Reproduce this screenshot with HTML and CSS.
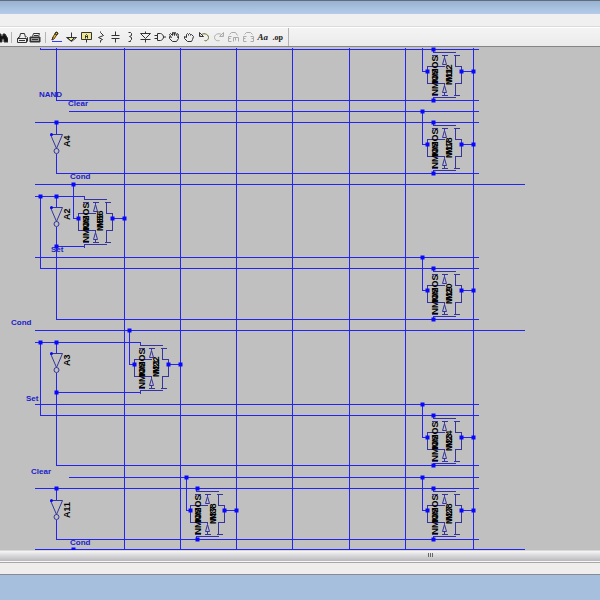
FILE: index.html
```html
<!DOCTYPE html>
<html lang="en">
<head>
    <meta charset="UTF-8">
    <meta name="viewport" content="width=device-width, initial-scale=1.0">
    <title>Schematic Editor</title>
    <link rel="stylesheet" href="styles.css">
</head>
<body>
    <div class="titlebar"></div>
    <div class="menubar"></div>
    <div class="toolbar">
        <div class="tools find">
            <button aria-label="Find"><svg viewBox="0 0 12 12"><path class="solid" d="M2 2h3v2h2V2h2l3 5v3H8V7H6v3H1V5z"/></svg></button>
        </div>
        <div class="tools print">
            <button aria-label="Print setup"><svg viewBox="0 0 12 12"><path d="M3.5 5.5l1-4h4l1 4M1.5 6.5l2-2M1.5 6.5h9v4h-9zM10.5 4.5l1 1v4M3 8.5h6"/></svg></button>
            <button aria-label="Print"><svg viewBox="0 0 12 12"><path class="shade" d="M1 5h10v5H1z"/><path d="M3.5 4.5l1-3h6l-1 3M1.5 5.5h9v4h-9zM3 7.5h6M5 3.500h4"/></svg></button>
        </div>
        <div class="tools draw">
            <button aria-label="Wire"><svg viewBox="0 0 12 12"><path class="pencil" d="M6 1l2 1-4 6-2 1 1-3z"/><path d="M6 1l2 1-1 2-2-1zM2 9l1-3"/><path class="wire-line" d="M2 10.5h10"/></svg></button>
            <button aria-label="Ground"><svg viewBox="-.5 -.5 12 12"><path class="yellow" d="M2 6h7L5.500 9.500z"/><path d="M6 1v5M1 6h10l-5 4z"/></svg></button>
            <button aria-label="Label net"><svg viewBox="-.5 -.5 12 12"><path class="yellow" d="M1 1h10v7H1z"/><path d="M6 8v3M5 7V4l1-1 1 1v3M5 5h2"/></svg></button>
            <button aria-label="Resistor"><svg viewBox="-.5 -.5 12 12"><path d="M5 0v1L8 4 3 6l4 2-2 1v2"/></svg></button>
            <button aria-label="Capacitor"><svg viewBox="-.5 -.5 12 12"><path d="M6 0v4M2 4h8M2 7h8M6 7v4"/></svg></button>
            <button aria-label="Inductor"><svg viewBox="-.5 -.5 12 12"><path d="M4 1h2l1 1v2L5 5l2 1v2l-1 1v1H4"/></svg></button>
            <button aria-label="Diode"><svg viewBox="-.5 -.5 12 12"><path d="M6 0v2M1 2h10L6 7zM1 8h10M6 8v3"/></svg></button>
            <button aria-label="Component"><svg viewBox="-.5 -.5 12 12"><path d="M3 2h3c4 1 4 6 0 7H3zM0 4h3M0 7h3M9 5.500h3"/></svg></button>
            <button aria-label="Move"><svg viewBox="-.5 -.5 12 12"><path d="M4 10L1 7V5l2 1-2-3 1-1 2 2V1h1l1 3V1h1l1 3 1-2 1 1-1 3 1-1v2l-2 3z"/></svg></button>
            <button aria-label="Drag"><svg viewBox="-.5 -.5 12 12"><path d="M4 10L1 7V5l2 1V3l1-1 1 1 1-1 1 1h1l2 2-1 3-1 2zM5 3v1M7 3v1"/></svg></button>
            <button aria-label="Undo"><svg viewBox="-.5 -.5 12 12"><path class="arc" d="M2 4c2-3 8-2 8 2 0 2-2 4-4 3"/><path d="M1 1v4h4z"/></svg></button>
            <button aria-label="Redo" disabled><svg viewBox="-.5 -.5 12 12"><path d="M9 4C7 1 1 2 1 6c0 2 2 4 5 3M10 1v4H6z"/></svg></button>
            <button aria-label="Rotate" disabled><svg viewBox="-.5 -.5 12 12"><path d="M2 3l2-2h4l2 3M4 5H1v5h3M1 7h2M6 10V6h5v4M8 6v3"/></svg></button>
            <button aria-label="Mirror" disabled><svg viewBox="-.5 -.5 12 12"><path d="M2 3l2-2h4l2 2M4 5H1v5h3M1 7h2M8 5h3v5H8M9 7h2"/></svg></button>
            <button class="text-tool">Aa</button>
            <button class="op-tool">.op</button>
        </div>
    </div>

    <main class="sheet">
        <svg class="schematic" width="600" height="503" viewBox="0 47 600 503" role="img" aria-label="Circuit schematic">
            <defs>
                <!-- inverter, origin at its input node -->
                <g id="inv">
                    <path class="wire" d="M0 0V12M0 31V51"/>
                    <path class="part" d="M-6 12H6L0 26z"/>
                    <circle class="part" cx="0" cy="28.5" r="2.5"/>
                    <circle class="pin" cx="-5" cy="12" r="1.5"/>
                </g>
                <!-- transmission gate, origin at the upper gate -->
                <g id="tgate">
                    <path class="wire" d="M-11 22H-6M28 22H40"/>
                    <path class="part line" d="M0 0V3H22M-2 6H4M8 6H14M20 6H26M22 6V17H28V34H22V46M11 17H-6V34H11M-2 46H4M8 46H14M20 46H26M0 51V48H22"/>
                    <path class="part" d="M11 6V8L9 15H13L11 8M11 34V36L9 43H13L11 36M11 43V46"/>
                    <rect class="node" x="-8" y="20" width="4" height="4"/>
                    <rect class="node" x="26" y="20" width="4" height="4"/>
                    <rect class="node" x="38" y="20" width="4" height="4"/>
                    <text class="name" transform="translate(4 46) rotate(-90)">NMOS</text>
                    <text class="name" transform="translate(4 33) rotate(-90)">NMOS</text>
                </g>
                <rect id="dot" class="node" x="-2" y="-2" width="4" height="4"/>
            </defs>

            <g transform="translate(.5 .5)">
                <!-- vertical buses -->
                <path class="wire" d="M124 47V549M180 47V549M236 47V549M292 47V549M349 47V549M405 47V549M473 47V549"/>
                <!-- rows -->
                <path class="wire" d="M40 47V49H478M56 47V100H478M68 111H478M34 122H478M56 173H478"/>
                <path class="wire" d="M34 184H524M34 196H84M56 246H84M34 257H478M40 196V268H478M56 246V319H478"/>
                <path class="wire" d="M34 330H524M34 342H140M56 392H140M34 404H478M40 342V415H478M56 392V465H478"/>
                <path class="wire" d="M68 477H478M34 488H478M56 539H478M34 549H524"/>
                <!-- control leads -->
                <path class="wire" d="M422 47V71M422 111V144M422 257V290M422 404V437M422 477V510M73 184V218M129 330V364M186 477V510"/>

                <use href="#inv" x="56" y="122"/>
                <use href="#inv" x="56" y="195"/>
                <use href="#inv" x="56" y="341"/>
                <use href="#inv" x="56" y="488"/>

                <use href="#tgate" x="433" y="49"/>
                <use href="#tgate" x="433" y="122"/>
                <use href="#tgate" x="433" y="268"/>
                <use href="#tgate" x="433" y="415"/>
                <use href="#tgate" x="433" y="488"/>
                <use href="#tgate" x="84" y="196"/>
                <use href="#tgate" x="140" y="342"/>
                <use href="#tgate" x="196" y="488"/>

                <use href="#dot" x="433" y="49"/>
                <use href="#dot" x="433" y="100"/>
                <use href="#dot" x="422" y="111"/>
                <use href="#dot" x="433" y="122"/>
                <use href="#dot" x="433" y="173"/>
                <use href="#dot" x="422" y="257"/>
                <use href="#dot" x="433" y="268"/>
                <use href="#dot" x="433" y="319"/>
                <use href="#dot" x="422" y="404"/>
                <use href="#dot" x="433" y="415"/>
                <use href="#dot" x="433" y="465"/>
                <use href="#dot" x="422" y="477"/>
                <use href="#dot" x="433" y="488"/>
                <use href="#dot" x="433" y="539"/>
                <use href="#dot" x="56" y="122"/>
                <use href="#dot" x="73" y="184"/>
                <use href="#dot" x="40" y="196"/>
                <use href="#dot" x="56" y="196"/>
                <use href="#dot" x="56" y="246"/>
                <use href="#dot" x="129" y="330"/>
                <use href="#dot" x="40" y="342"/>
                <use href="#dot" x="56" y="342"/>
                <use href="#dot" x="56" y="392"/>
                <use href="#dot" x="186" y="477"/>
                <use href="#dot" x="56" y="488"/>
                <use href="#dot" x="197" y="488"/>
                <use href="#dot" x="197" y="539"/>
                <use href="#dot" x="73" y="549"/>
            </g>

            <g class="name">
                <text transform="translate(70 147) rotate(-90)">A4</text>
                <text transform="translate(70 220) rotate(-90)">A2</text>
                <text transform="translate(70 366) rotate(-90)">A3</text>
                <text transform="translate(70 518) rotate(-90)">A11</text>

                <text transform="translate(452 85) rotate(-90)">M11</text>
                <text transform="translate(452 82) rotate(-90)">M12</text>
                <text transform="translate(452 158) rotate(-90)">M17</text>
                <text transform="translate(452 155) rotate(-90)">M18</text>
                <text transform="translate(452 304) rotate(-90)">M19</text>
                <text transform="translate(452 301) rotate(-90)">M20</text>
                <text transform="translate(452 451) rotate(-90)">M23</text>
                <text transform="translate(452 448) rotate(-90)">M24</text>
                <text transform="translate(452 524) rotate(-90)">M27</text>
                <text transform="translate(452 521) rotate(-90)">M28</text>
                <text transform="translate(103 231) rotate(-90)">M55</text>
                <text transform="translate(103 228) rotate(-90)">M56</text>
                <text transform="translate(159 377) rotate(-90)">M21</text>
                <text transform="translate(159 374) rotate(-90)">M22</text>
                <text transform="translate(216 524) rotate(-90)">M37</text>
                <text transform="translate(216 521) rotate(-90)">M38</text>
            </g>

            <g class="net">
                <text x="39" y="97">NAND</text>
                <text x="68" y="106">Clear</text>
                <text x="70" y="179">Cond</text>
                <text x="51" y="252">Set</text>
                <text x="11" y="325">Cond</text>
                <text x="26" y="401">Set</text>
                <text x="31" y="474">Clear</text>
                <text x="70" y="545">Cond</text>
            </g>
        </svg>
    </main>

    <div class="scrollbar"><span class="grip"></span></div>
    <div class="statusbar"></div>
    <div class="desktop"></div>
</body>
</html>
```
FILE: styles.css
```css
* {
    box-sizing: border-box;
}
body {
    margin: 0;
    min-height: 100vh;
    display: flex;
    flex-direction: column;
    background-color: #f0f0f0;
    font-family: "Liberation Sans", Arial, sans-serif;
    overflow: hidden;
}
.titlebar {
    height: 14px;
    border-top: 1px solid #5f6d7d;
    background: linear-gradient(#98b2d0, #b5cde9);
}
.menubar {
    height: 13px;
    background-color: #f0f0f0;
    border-bottom: 1px solid #dcdcdc;
}
.toolbar {
    display: flex;
    height: 20px;
    border-top: 1px solid #ffffff;
    border-bottom: 1px solid #858585;
    background: linear-gradient(#f4f4f4, #ebebeb);
}
.tools {
    display: grid;
    grid-auto-flow: column;
    grid-auto-columns: 1fr;
    padding: 0 3px;
    border-right: 1px solid #b4b4b4;
}
.find,
.print {
    margin: 4px 0 3px;
}
.find {
    width: 12px;
    padding: 0;
}
.print {
    width: 34px;
}
.draw {
    width: 243px;
}
.toolbar button {
    display: flex;
    align-items: center;
    justify-content: center;
    min-width: 0;
    padding: 0;
    border: none;
    background: none;
    color: #222222;
}
.toolbar .find button {
    justify-content: flex-start;
    overflow: hidden;
}
.find svg {
    margin-left: -4px;
}
.toolbar svg {
    flex: none;
    width: 12px;
    height: 12px;
    fill: none;
    stroke: #333333;
    stroke-width: 1;
}
.toolbar button:disabled svg {
    stroke: #ababab;
}
.toolbar .solid {
    fill: #111111;
}
.toolbar .shade {
    fill: #999999;
}
.toolbar .pencil {
    fill: #e8c81c;
    stroke: #5b3a10;
}
.toolbar .yellow {
    fill: #f0e890;
}
.toolbar .wire-line {
    stroke: #3a3aff;
}
.toolbar .arc {
    stroke: #66661c;
}
.toolbar .text-tool {
    font: italic bold 9px "Liberation Serif", serif;
}
.toolbar .op-tool {
    font: bold 8px "Liberation Serif", serif;
}
.sheet {
    flex: 1;
    background-color: #c0c0c0;
    overflow: hidden;
}
.schematic {
    display: block;
}
.wire,
.part {
    fill: none;
    stroke: #2424ee;
    stroke-width: 1;
}
.wire,
.line {
    shape-rendering: crispEdges;
}
.part {
    stroke: #34349c;
}
.pin,
.node {
    fill: #0808ff;
}
.name,
.net {
    font-size: 8px;
    font-weight: bold;
}
.name {
    font-size: 9px;
    fill: #000000;
}
.net {
    fill: #1c1cc8;
}
.scrollbar {
    display: flex;
    justify-content: center;
    height: 12px;
    padding: 2px 0 0 260px;
    border-top: 1px solid #d8d8d8;
    border-bottom: 1px solid #f8f8f8;
    background: linear-gradient(#f6f6f6, #dcdcde 40%, #b9b9bd);
}
.grip {
    width: 5px;
    height: 4px;
    background: repeating-linear-gradient(90deg, #666666 0 1px, transparent 1px 2px);
}
.statusbar {
    height: 13px;
    border-top: 1px solid #a8a8a8;
    border-bottom: 1px solid #868c94;
    background-color: #f0eeed;
}
.desktop {
    height: 25px;
    background-color: #a6bfdc;
}
```
